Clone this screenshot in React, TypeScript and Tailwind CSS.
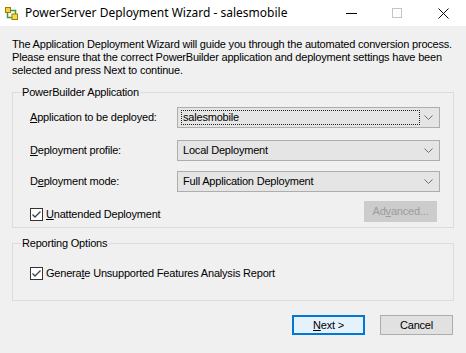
import React from "react";

const Chevron = () => (
  <svg width="9" height="6" viewBox="0 0 9 6" className="shrink-0">
    <path d="M0.5 0.5 L4.5 4.5 L8.5 0.5" fill="none" stroke="#6d6d6d" strokeWidth="1" />
  </svg>
);

const Check = () => (
  <span className="flex h-[13px] w-[13px] shrink-0 items-center justify-center border border-[#333333] bg-white">
    <svg width="11" height="11" viewBox="0 0 11 11">
      <path d="M1.5 5.5 L4 8 L9.5 2.5" fill="none" stroke="#444444" strokeWidth="1.4" />
    </svg>
  </span>
);

const Combo = ({ text, focus }: { text: string; focus?: boolean }) => (
  <div className="flex h-[21px] w-[263px] items-center border border-[#adadad] bg-[#e5e5e5] pl-[3px] pr-[6px]">
    {focus ? (
      <div className="flex h-[15px] w-[239px] items-center border border-dotted border-[#222222] pl-[1px]">
        {text}
      </div>
    ) : (
      <div className="flex h-[15px] w-[239px] items-center pl-[2px]">{text}</div>
    )}
    <div className="flex flex-1 justify-end">
      <Chevron />
    </div>
  </div>
);

export default function App() {
  return (
    <div
      className="flex h-[353px] w-[466px] flex-col whitespace-nowrap bg-[#f0f0f0] text-[11px] leading-[13px] tracking-[-0.2px] text-black"
      style={{ fontFamily: '"Liberation Sans", Arial, sans-serif' }}
    >
      {/* Title bar */}
      <div className="flex h-[26px] items-center bg-white tracking-normal">
        <div className="ml-[5px] mr-[7px] flex h-[14px] w-[13px] items-center">
          <svg width="13" height="13" viewBox="0 0 13 13">
            <rect x="2.5" y="3.5" width="8" height="7" fill="none" stroke="#3c9a3c" strokeWidth="1.5" />
            <rect x="0.5" y="0.5" width="5" height="5" fill="#f4d03f" stroke="#9a7d0a" strokeWidth="1" />
            <rect x="7" y="7" width="5.5" height="5.5" fill="#f7dc3b" stroke="#9a7d0a" strokeWidth="1" />
          </svg>
        </div>
        <div
          className="text-[12px] leading-[16px] text-black"
          style={{ fontFamily: '"Noto Sans", "Open Sans", sans-serif' }}
        >
          PowerServer Deployment Wizard - salesmobile
        </div>
        <div className="flex-1" />
        <div className="flex h-full w-[46px] items-center justify-center">
          <div className="h-px w-[11px] bg-black" />
        </div>
        <div className="flex h-full w-[46px] items-center justify-center">
          <div className="h-[10px] w-[10px] border border-[#c4c4c4]" />
        </div>
        <div className="flex h-full w-[46px] items-center justify-center">
          <svg width="11" height="11" viewBox="0 0 11 11">
            <path d="M0.5 0.5 L10.5 10.5 M10.5 0.5 L0.5 10.5" stroke="#111" strokeWidth="1" />
          </svg>
        </div>
      </div>

      {/* Intro text */}
      <p className="mx-[12px] mt-[12px]">
        The Application Deployment Wizard will guide you through the automated conversion process.
        <br />
        Please ensure that the correct PowerBuilder application and deployment settings have been
        <br />
        selected and press Next to continue.
      </p>

      {/* Group 1 */}
      <fieldset className="mx-[12px] mt-[9px] border border-[#dcdcdc] px-0 pb-[5px]">
        <legend className="ml-[8px] px-[1px] leading-[13px]">PowerBuilder Application</legend>
        <div className="flex flex-col pl-[17px] pr-[13px] pt-[8px]">
          <div className="flex items-center">
            <div className="w-[147px]">
              <u>A</u>pplication to be deployed:
            </div>
            <Combo text="salesmobile" focus />
          </div>
          <div className="mt-[12px] flex items-center">
            <div className="w-[147px]">
              <u>D</u>eployment profile:
            </div>
            <Combo text="Local Deployment" />
          </div>
          <div className="mt-[10px] flex items-center">
            <div className="w-[147px]">
              D<u>e</u>ployment mode:
            </div>
            <Combo text="Full Application Deployment" />
          </div>
          <div className="mt-[9px] flex h-[21px] items-start">
            <div className="mt-[7px] flex items-center">
              <Check />
              <span className="ml-[3px]">
                <u>U</u>nattended Deployment
              </span>
            </div>
            <div className="flex-1" />
            <div className="mr-[3px] flex h-[21px] w-[73px] items-center justify-center bg-[#cccccc] text-[#9c9c9c]">
              <span>
                Ad<u>v</u>anced...
              </span>
            </div>
          </div>
        </div>
      </fieldset>

      {/* Group 2 */}
      <fieldset className="mx-[12px] mt-[9px] border border-[#dcdcdc] px-0 pb-[20px]">
        <legend className="ml-[8px] px-[1px] leading-[13px]">Reporting Options</legend>
        <div className="flex items-center pl-[17px] pt-[17px]">
          <Check />
          <span className="ml-[3px]">
            Genera<u>t</u>e Unsupported Features Analysis Report
          </span>
        </div>
      </fieldset>

      {/* Buttons */}
      <div className="mr-[13px] mt-[14px] flex justify-end gap-[15px]">
        <div className="flex h-[20px] w-[73px] items-center justify-center border-2 border-[#0078d7] bg-[#e5f1fb]">
          <span>
            <u>N</u>ext &gt;
          </span>
        </div>
        <div className="flex h-[20px] w-[73px] items-center justify-center border border-[#adadad] bg-[#e1e1e1]">
          Cancel
        </div>
      </div>
    </div>
  );
}
